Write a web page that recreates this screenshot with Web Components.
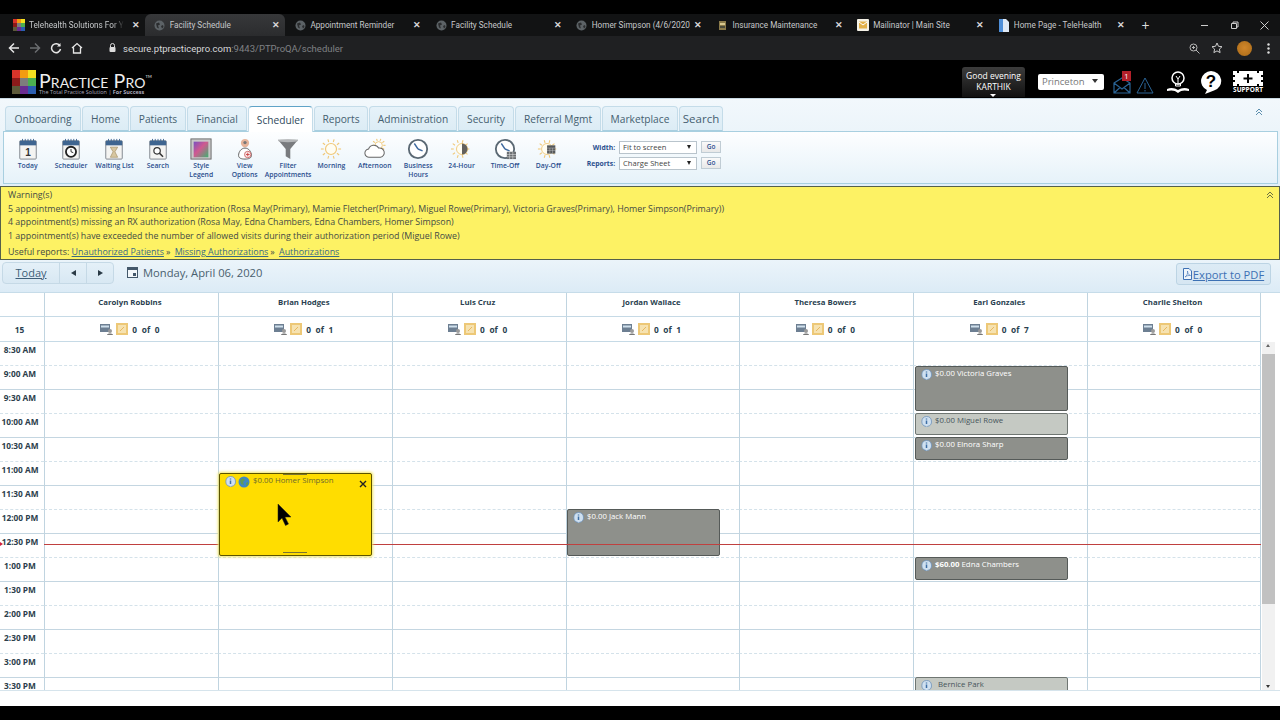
<!DOCTYPE html>
<html lang="en">
<head>
<meta charset="utf-8">
<title>Facility Schedule</title>
<style>
    html, body { margin: 0; height: 720px; background: #000; overflow: hidden; }
    body { display: flex; flex-direction: column; font-family: "Open Sans", "Noto Sans", sans-serif; }
    body > * { flex: none; }
</style>
</head>
<body>
<browser-bar></browser-bar>
<pp-header></pp-header>
<pp-nav></pp-nav>
<pp-warnings></pp-warnings>
<pp-datebar></pp-datebar>
<pp-schedule></pp-schedule>
<script>
const globe = `<svg width="11" height="11" viewBox="0 0 11 11"><circle cx="5.500" cy="5.500" r="5" fill="#5c6266"/><path d="M2 3.500l3-1 1 2-2 1 1 3-2-1zM7 6l2-1 .5 2-1.500 1.500z" fill="#2a2c2e"/></svg>`;

const tabIcons = {
    squares: `<svg width="12" height="12" viewBox="0 0 12 12"><rect width="4" height="4" fill="#d9342a"/><rect x="4" width="4" height="4" fill="#f39c12"/><rect x="8" width="4" height="4" fill="#f5e020"/><rect y="4" width="4" height="4" fill="#8c1a1a"/><rect x="4" y="4" width="4" height="4" fill="#7d7d7d"/><rect x="8" y="4" width="4" height="4" fill="#4caf50"/><rect y="8" width="4" height="4" fill="#5d5a3a"/><rect x="4" y="8" width="4" height="4" fill="#6a2c91"/><rect x="8" y="8" width="4" height="4" fill="#2a5db0"/></svg>`,
    globe,
    insurance: `<svg width="9" height="9" viewBox="0 0 9 9"><rect x="1" width="7" height="9" fill="#8a7a4a"/><rect x="2" y="2" width="5" height="2" fill="#d8c890"/><rect x="2" y="5" width="5" height="2" fill="#4a4a3a"/></svg>`,
    mail: `<svg width="12" height="12" viewBox="0 0 12 12"><rect width="12" height="12" rx="1" fill="#f4f1e6"/><rect x="2" y="2.500" width="8" height="7" fill="#e2b04a"/><path d="M2 3l4 3 4-3" fill="none" stroke="#fff" stroke-width="1"/></svg>`,
    doc: `<svg width="12" height="13" viewBox="0 0 12 13"><path d="M1 0h7l3 3v10H1z" fill="#dfe9f5"/><rect x="1" width="4" height="13" fill="#4f8fd8"/></svg>`
};

class BrowserTab extends HTMLElement {
    connectedCallback() {
        this.attachShadow({ mode: 'open' });
        const active = this.hasAttribute('active');
        this.shadowRoot.innerHTML = `
            <style>
                :host { display: flex; align-items: center; width: 140.700px; flex: none; height: 22px; box-sizing: border-box; padding: 0 5px 0 9px; gap: 4px; font-family: Roboto, sans-serif; font-size: 8.200px; color: #c6c8ca; border-radius: 6px 6px 0 0; background: ${active ? 'linear-gradient(#37383a,#2b2c2e)' : 'transparent'}; }
                .icon { width: 12px; display: flex; justify-content: center; flex: none; }
                .name { flex: 1; min-width: 0; white-space: nowrap; overflow: hidden; }
                :host([fade]) .name { -webkit-mask-image: linear-gradient(90deg, #000 85%, transparent 96%); mask-image: linear-gradient(90deg, #000 85%, transparent 96%); }
                .x { font-size: 8.500px; color: #d8d8d8; flex: none; font-weight: 700; }
            </style>
            <span class="icon">${tabIcons[this.dataset.icon]}</span>
            <span class="name"><slot></slot></span>
            <span class="x">✕</span>
        `;
    }
}

class BrowserBar extends HTMLElement {
    connectedCallback() {
        this.attachShadow({ mode: 'open' });
        this.shadowRoot.innerHTML = `
            <style>
                :host { display: block; padding-top: 14px; background: #000; }
                .tabs { display: flex; height: 22px; padding-left: 4px; background: #121314; align-items: stretch; }
                .plus { width: 28px; margin-left: 2px; display: flex; align-items: center; justify-content: center; color: #ddd; font-size: 14px; }
                .win { margin-left: auto; display: flex; align-items: center; color: #ccc; padding-right: 1px; }
                .win span { width: 30px; display: flex; justify-content: center; }
                .tools { display: flex; align-items: center; height: 24px; background: #1f2022; }
                .tools svg { flex: none; }
                .nav { display: flex; align-items: center; gap: 9px; padding-left: 8px; width: 85px; flex: none; }
                .url { font-family: Roboto, sans-serif; font-size: 9.500px; color: #7f8184; }
                .url b { font-weight: 400; color: #d7d8da; }
                .right { margin-left: auto; display: flex; align-items: center; padding-right: 10px; }
                .avatar { width: 15px; height: 15px; border-radius: 50%; background: radial-gradient(circle at 50% 45%, #d0862a, #a86a18); margin: 0 15px 0 14px; }
            </style>
            <div class="tabs">
                <browser-tab data-icon="squares" fade>Telehealth Solutions For You</browser-tab>
                <browser-tab data-icon="globe" active>Facility Schedule</browser-tab>
                <browser-tab data-icon="globe">Appointment Reminder</browser-tab>
                <browser-tab data-icon="globe">Facility Schedule</browser-tab>
                <browser-tab data-icon="globe">Homer Simpson (4/6/2020)</browser-tab>
                <browser-tab data-icon="insurance">Insurance Maintenance</browser-tab>
                <browser-tab data-icon="mail">Mailinator | Main Site</browser-tab>
                <browser-tab data-icon="doc">Home Page - TeleHealth</browser-tab>
                <span class="plus">+</span>
                <div class="win">
                    <span><svg width="9" height="9"><path d="M1 4.500h7" stroke="#ccc"/></svg></span>
                    <span><svg width="9" height="9"><path d="M1.500 2.500h5v5h-5zM3 2.500V1h5v5H6.500" fill="none" stroke="#ccc"/></svg></span>
                    <span><svg width="9" height="9"><path d="M.5.5l8 8M8.500.5l-8 8" stroke="#ccc"/></svg></span>
                </div>
            </div>
            <div class="tools">
                <div class="nav">
                    <svg width="12" height="12" viewBox="0 0 12 12"><path d="M11 6H2M6 1.500L1.500 6 6 10.500" fill="none" stroke="#e6e6e6" stroke-width="1.500"/></svg>
                    <svg width="12" height="12" viewBox="0 0 12 12"><path d="M1 6h9M6 1.500L10.500 6 6 10.500" fill="none" stroke="#6b6d70" stroke-width="1.500"/></svg>
                    <svg width="12" height="12" viewBox="0 0 12 12"><path d="M10 4A4.500 4.500 0 1 0 10.500 7" fill="none" stroke="#e6e6e6" stroke-width="1.500"/><path d="M10.500 1v3.500H7z" fill="#e6e6e6"/></svg>
                    <svg width="12" height="12" viewBox="0 0 12 12"><path d="M1 6l5-4.500L11 6M2.500 5.500V11h7V5.500" fill="none" stroke="#e6e6e6" stroke-width="1.300"/></svg>
                </div>
                <svg width="9" height="10" viewBox="0 0 9 10" style="margin-left:15px"><path d="M2.500 4V2.500a2 2 0 0 1 4 0V4" fill="none" stroke="#ddd"/><rect x="1.500" y="4" width="6" height="5" rx="1" fill="#ddd"/></svg>
                <span class="url" style="margin-left:6px"><b>secure.ptpracticepro.com</b>:9443/PTProQA/scheduler</span>
                <div class="right">
                    <svg width="11" height="11" viewBox="0 0 11 11" style="margin-right:11px"><circle cx="4.500" cy="4.500" r="3.500" fill="none" stroke="#b8b8b8"/><path d="M7 7l3.500 3.500M3 4.500h3M4.500 3v3" stroke="#b8b8b8"/></svg>
                    <svg width="12" height="12" viewBox="0 0 12 12"><path d="M6 1l1.500 3.300 3.500.4-2.600 2.400.7 3.500L6 8.900l-3.100 1.700.7-3.500L1 4.700l3.500-.4z" fill="none" stroke="#ccc"/></svg>
                    <span class="avatar"></span>
                    <svg width="3" height="11"><circle cx="1.500" cy="1.500" r="1.200" fill="#ddd"/><circle cx="1.500" cy="5.500" r="1.200" fill="#ddd"/><circle cx="1.500" cy="9.500" r="1.200" fill="#ddd"/></svg>
                </div>
            </div>
        `;
    }
}

class PpHeader extends HTMLElement {
    connectedCallback() {
        this.attachShadow({ mode: 'open' });
        this.shadowRoot.innerHTML = `
            <style>
                :host { display: flex; align-items: flex-end; height: 38px; background: #000; box-sizing: border-box; padding: 0 17px 1px 12px; color: #fff; }
                .logo { display: flex; align-items: flex-start; gap: 3px; margin-bottom: 2px; }
                .mark { display: grid; grid-template-columns: repeat(3, 8px); grid-auto-rows: 8px; }
                .brand { display: flex; flex-direction: column; padding-top: 1px; }
                .name { font-family: Lato, sans-serif; font-size: 19.500px; font-variant: small-caps; line-height: 19px; height: 19px; letter-spacing: .1px; color: #eee; white-space: nowrap; }
                .name sup { font-size: 4px; line-height: 0; vertical-align: 10px; }
                .tag { font-size: 5.500px; line-height: 6px; margin-top: -1px; color: #aab; white-space: nowrap; }
                .right { margin-left: auto; display: flex; align-items: flex-end; }
                .greet { width: 63px; height: 30px; box-sizing: border-box; padding-top: 3px; background: linear-gradient(#3c3c3c, #111); border-radius: 3px 3px 0 0; font-size: 8.500px; line-height: 11px; text-align: center; position: relative; }
                .greet i { position: absolute; left: 28px; bottom: 0; border: 3px solid transparent; border-top-color: #fff; border-bottom: 0; }
                .loc { width: 66px; height: 16px; box-sizing: border-box; margin: 0 0 7px 13px; background: #fff; border-radius: 2px; color: #777; font-size: 9.500px; padding-left: 4px; line-height: 16px; position: relative; }
                .loc i { position: absolute; right: 6px; top: 5px; border: 3px solid transparent; border-top: 4px solid #333; border-bottom: 0; }
                .icons { display: flex; align-items: flex-end; margin-left: 9px; margin-bottom: 3px; }
                .mail { position: relative; display: flex; }
                .badge { position: absolute; left: 9px; top: -5px; width: 9px; height: 10px; background: #b3202a; color: #fff; font-size: 7.500px; line-height: 10px; text-align: center; }
                .support { display: flex; flex-direction: column; align-items: center; font-size: 6.500px; line-height: 8px; margin-left: 11px; font-weight: 700; }
            </style>
            <div class="logo">
                <div class="mark">
                    <span style="background:#d9342a"></span><span style="background:#f39c12"></span><span style="background:#f5e020"></span>
                    <span style="background:#8c1a1a"></span><span style="background:#7d7d7d"></span><span style="background:#4caf50"></span>
                    <span style="background:#5d5a3a"></span><span style="background:#6a2c91"></span><span style="background:#2a5db0"></span>
                </div>
                <div class="brand">
                    <span class="name">Practice Pro<sup>TM</sup></span>
                    <span class="tag">The Total Practice Solution | <b>For Success</b></span>
                </div>
            </div>
            <div class="right">
                <div class="greet">Good evening<br>KARTHIK<i></i></div>
                <div class="loc">Princeton<i></i></div>
                <div class="icons">
                    <span class="mail">
                        <svg width="18" height="18" viewBox="0 0 18 18"><path d="M1 7l8-5 8 5v10H1zM1 7l8 6 8-6M1 17l6-5.500M17 17l-6-5.500" fill="none" stroke="#2a6496" stroke-width="1.200"/></svg>
                        <span class="badge">1</span>
                    </span>
                    <svg width="18" height="17" viewBox="0 0 18 17" style="margin-left:5px"><path d="M9 1l8 15H1zM9 6v6M9 13v1.500" fill="none" stroke="#2a6496" stroke-width="1"/></svg>
                    <svg width="24" height="24" viewBox="0 0 24 24" style="margin-left:12px"><circle cx="12" cy="8" r="6" fill="none" stroke="#fff" stroke-width="1.500"/><path d="M10 6l2 3 2-3M12 9v4M9.500 14h5v2h-5z" fill="none" stroke="#fff"/><path d="M12 23C9 20 5 20 1 21v-2c4-2 8-1 11 1 3-2 7-3 11-1v2c-4-1-8-1-11 2z" fill="#fff"/></svg>
                    <svg width="22" height="24" viewBox="0 0 22 24" style="margin-left:10px"><path d="M11 1a10.500 10 0 0 1 3 19.500L5 24l2-4A10.500 10 0 0 1 11 1z" fill="#fff"/><text x="11" y="17" font-family="Liberation Sans, sans-serif" font-size="17" font-weight="700" text-anchor="middle" fill="#000">?</text></svg>
                    <span class="support">
                        <svg width="30" height="15" viewBox="0 0 30 15"><path d="M0 0h4v2h2V0h18v2h2V0h4v4h-2v2h2v3h-2v2h2v4h-4v-2h-2v2H6v-2H4v2H0v-4h2V9H0V6h2V4H0z" fill="#fff"/><path d="M15 3v9M10.500 7.500h9" stroke="#000" stroke-width="2"/></svg>
                        SUPPORT
                    </span>
                </div>
            </div>
        `;
    }
}

class NavTab extends HTMLElement {
    connectedCallback() {
        this.attachShadow({ mode: 'open' });
        const active = this.hasAttribute('active');
        this.shadowRoot.innerHTML = `
            <style>
                :host { display: flex; align-items: center; justify-content: center; box-sizing: border-box; height: ${active ? 26 : 25}px; width: ${this.dataset.w}px; margin-right: 1px; font-size: ${this.dataset.size || 10.2}px; color: ${active ? '#2f4a5c' : '#456070'}; border: 1px solid #c4dce9; border-bottom: ${active ? 0 : '1px solid #a8cfe0'}; border-radius: 4px 4px 0 0; background: ${active ? '#fff' : 'linear-gradient(#e6f2f9,#dcecf5)'}; ${active ? 'border-top: 1px solid #5fa3c7; position: relative; z-index: 1;' : ''} white-space: nowrap; }
            </style>
            <slot></slot>
        `;
    }
}

const cal = inner => `<svg width="22" height="22" viewBox="0 0 24 24"><rect x="3" y="3" width="18" height="20" rx="1" fill="#f4f4f2" stroke="#7b8188"/><rect x="3" y="3" width="18" height="5" fill="#3f6590"/><path d="M6 1v3M9 1v3M12 1v3M15 1v3M18 1v3" stroke="#3f6590"/>${inner}</svg>`;
const rays = (cx, cy, r1, r2, color) => Array.from({ length: 10 }, (_, i) => {
    const a = i * Math.PI / 5;
    return `<path d="M${(cx + r1 * Math.cos(a)).toFixed(1)} ${(cy + r1 * Math.sin(a)).toFixed(1)}L${(cx + r2 * Math.cos(a)).toFixed(1)} ${(cy + r2 * Math.sin(a)).toFixed(1)}" stroke="${color}" stroke-width="1.200"/>`;
}).join('');
const clock = `<circle cx="12" cy="12" r="10" fill="#fff" stroke="#5a6873" stroke-width="2"/><path d="M12 12L8 6M12 12l5 2" stroke="#3f6aa0" stroke-width="1.500" fill="none"/>`;

const toolIcons = {
    today: cal(`<text x="12" y="20" font-family="Liberation Sans, sans-serif" font-size="11" text-anchor="middle" fill="#333">1</text>`),
    scheduler: cal(`<circle cx="12" cy="15" r="5.500" fill="#fff" stroke="#222" stroke-width="2"/><path d="M12 12v3l2.500 1" stroke="#222" fill="none"/>`),
    waiting: cal(`<path d="M8 10h8l-3 5 3 6H8l3-6z" fill="#d7c6a0" stroke="#a08b60" stroke-width=".7"/>`),
    search: cal(`<circle cx="11" cy="14" r="3.500" fill="#fff" stroke="#333" stroke-width="1.300"/><path d="M13.500 16.500l4 4" stroke="#333" stroke-width="1.600"/>`),
    legend: `<svg width="22" height="22" viewBox="0 0 24 24"><defs><linearGradient id="a" x1="0" x2="1" y1="0" y2="1"><stop offset="0" stop-color="#7a50c0"/><stop offset=".45" stop-color="#d05a90"/><stop offset="1" stop-color="#40b070"/></linearGradient></defs><rect x="1" y="1" width="22" height="22" fill="#c8c8c8" stroke="#666"/><rect x="4" y="4" width="16" height="17" fill="url(#a)"/></svg>`,
    view: `<svg width="22" height="22" viewBox="0 0 24 24"><circle cx="12" cy="5.500" r="4.500" fill="#e6b49a"/><circle cx="12" cy="5" r="1.800" fill="#777"/><path d="M12 11c-4 0-7 4-7 8 0 3 3 4 7 4s7-1 7-4c0-4-3-8-7-8z" fill="#fff" stroke="#555"/><circle cx="15" cy="18" r="3.500" fill="#fbeaea" stroke="#c66"/><path d="M15 16v4M13 18h4" stroke="#c44"/></svg>`,
    filter: `<svg width="22" height="22" viewBox="0 0 24 24"><path d="M1 2h22l-8.500 10v11l-5-3v-8z" fill="#797b7e"/><ellipse cx="12" cy="3" rx="11" ry="1.700" fill="#b4b6b8"/></svg>`,
    morning: `<svg width="22" height="22" viewBox="0 0 24 24"><circle cx="12" cy="12" r="6" fill="#fffdf2" stroke="#f0c878" stroke-width="1.300"/>${rays(12, 12, 8, 11, '#f0c878')}</svg>`,
    afternoon: `<svg width="22" height="22" viewBox="0 0 24 24">${rays(16, 8, 5, 7.500, '#f0c878')}<circle cx="16" cy="8" r="4" fill="#fff" stroke="#f0c878"/><path d="M6 21a4.500 4.500 0 0 1-1-9 6 6 0 0 1 11-1 5 5 0 0 1 2 10z" fill="#fff" stroke="#666" stroke-width="1.100"/></svg>`,
    business: `<svg width="22" height="22" viewBox="0 0 24 24">${clock}</svg>`,
    '24hour': `<svg width="22" height="22" viewBox="0 0 24 24">${rays(10, 12, 7, 10, '#f0c878')}<circle cx="12" cy="12" r="6" fill="#fffdf2" stroke="#f0c878"/><path d="M12 6a6 6 0 0 1 0 12z" fill="#62605c"/></svg>`,
    timeoff: `<svg width="22" height="22" viewBox="0 0 24 24">${clock}<rect x="14" y="15" width="10" height="8" fill="#6b6f72"/><path d="M14 18h10M14 20.500h10M17 15v8M20.500 15v8" stroke="#ddd" stroke-width=".6"/></svg>`,
    dayoff: `<svg width="22" height="22" viewBox="0 0 24 24">${rays(11, 12, 7, 10, '#f0c878')}<circle cx="11" cy="12" r="6" fill="#fffdf2" stroke="#f0c878"/><rect x="11" y="8" width="9" height="9" fill="#55585a"/><path d="M11 11h9M11 13.500h9M14 11v6M17 11v6" stroke="#ccc" stroke-width=".5"/></svg>`
};

class ToolBtn extends HTMLElement {
    connectedCallback() {
        this.attachShadow({ mode: 'open' });
        this.shadowRoot.innerHTML = `
            <style>
                :host { display: flex; flex-direction: column; align-items: center; width: 43.400px; flex: none; font-size: 6.800px; font-weight: 600; line-height: 9px; color: #2b4f8e; text-align: center; white-space: nowrap; }
                svg { display: block; margin-bottom: 1px; }
            </style>
            ${toolIcons[this.dataset.icon]}
            <slot></slot>
        `;
    }
}

class FormRow extends HTMLElement {
    connectedCallback() {
        this.attachShadow({ mode: 'open' });
        this.shadowRoot.innerHTML = `
            <style>
                :host { display: flex; align-items: center; height: 14px; }
                label { width: 40px; text-align: right; font-size: 6.800px; font-weight: 700; color: #2b4f8e; margin-right: 4px; }
                .sel { width: 78px; height: 13px; box-sizing: border-box; border: 1px solid #b9c4cc; background: #fff; font-size: 7.600px; line-height: 11px; color: #444; padding-left: 3px; position: relative; }
                .sel i { position: absolute; right: 5px; top: 3px; border: 2.500px solid transparent; border-top: 4px solid #222; border-bottom: 0; }
                .go { width: 20px; height: 12px; box-sizing: border-box; margin-left: 4px; border: 1px solid #c0ccd4; background: linear-gradient(#fafafa,#e8e8e8); font-size: 6.500px; line-height: 10px; font-weight: 600; text-align: center; color: #2b4f8e; }
            </style>
            <label>${this.dataset.label}</label>
            <span class="sel"><slot></slot><i></i></span>
            <span class="go">Go</span>
        `;
    }
}

class PpNav extends HTMLElement {
    connectedCallback() {
        this.attachShadow({ mode: 'open' });
        this.shadowRoot.innerHTML = `
            <style>
                :host { display: block; height: 88px; box-sizing: border-box; padding: 7px 2px 0 3px; background: linear-gradient(#f2f8fc,#e2eff7); border-top: 1px solid #c8d8e2; font-family: "Open Sans", sans-serif; position: relative; }
                .tabs { display: flex; padding-left: 2px; height: 25px; }
                .bar { box-sizing: border-box; height: 53px; display: flex; padding: 6px 0 0 2px; border: 1px solid #a8cfe0; background: linear-gradient(#fdfeff,#e6f2f9); }
                .form { display: flex; flex-direction: column; gap: 2px; padding: 2px 0 0 0; margin-left: 5px; }
                .up { position: absolute; right: 17px; top: 9px; }
            </style>
            <div class="tabs">
                <nav-tab data-w="76">Onboarding</nav-tab>
                <nav-tab data-w="47">Home</nav-tab>
                <nav-tab data-w="56">Patients</nav-tab>
                <nav-tab data-w="60">Financial</nav-tab>
                <nav-tab data-w="65" active>Scheduler</nav-tab>
                <nav-tab data-w="54">Reports</nav-tab>
                <nav-tab data-w="88">Administration</nav-tab>
                <nav-tab data-w="56">Security</nav-tab>
                <nav-tab data-w="86">Referral Mgmt</nav-tab>
                <nav-tab data-w="76">Marketplace</nav-tab>
                <nav-tab data-w="44" data-size="11.500">Search</nav-tab>
            </div>
            <div class="bar">
                <tool-btn data-icon="today">Today</tool-btn>
                <tool-btn data-icon="scheduler">Scheduler</tool-btn>
                <tool-btn data-icon="waiting">Waiting List</tool-btn>
                <tool-btn data-icon="search">Search</tool-btn>
                <tool-btn data-icon="legend">Style<br>Legend</tool-btn>
                <tool-btn data-icon="view">View<br>Options</tool-btn>
                <tool-btn data-icon="filter">Filter<br>Appointments</tool-btn>
                <tool-btn data-icon="morning">Morning</tool-btn>
                <tool-btn data-icon="afternoon">Afternoon</tool-btn>
                <tool-btn data-icon="business">Business<br>Hours</tool-btn>
                <tool-btn data-icon="24hour">24-Hour</tool-btn>
                <tool-btn data-icon="timeoff">Time-Off</tool-btn>
                <tool-btn data-icon="dayoff">Day-Off</tool-btn>
                <div class="form">
                    <form-row data-label="Width:">Fit to screen</form-row>
                    <form-row data-label="Reports:">Charge Sheet</form-row>
                </div>
            </div>
            <svg class="up" width="8" height="8" viewBox="0 0 8 8"><path d="M1 4l3-3 3 3M1 7l3-3 3 3" fill="none" stroke="#5c8fae"/></svg>
        `;
    }
}

class PpWarnings extends HTMLElement {
    connectedCallback() {
        this.attachShadow({ mode: 'open' });
        this.shadowRoot.innerHTML = `
            <style>
                :host { display: block; height: 74px; box-sizing: border-box; padding: 2px 7px 0 7px; background: #fdf264; border: 1px solid #55604a; font-size: 8.870px; line-height: 13.500px; color: #444b45; position: relative; white-space: nowrap; }
                .reports { margin-top: 2.500px; }
                a { color: #3a6a86; text-decoration: underline; }
                i { font-style: normal; margin: 0 2px; }
                .up { position: absolute; right: 5px; top: 4px; }
            </style>
            <div>Warning(s)</div>
            <div>5 appointment(s) missing an Insurance authorization (Rosa May(Primary), Mamie Fletcher(Primary), Miguel Rowe(Primary), Victoria Graves(Primary), Homer Simpson(Primary))</div>
            <div>4 appointment(s) missing an RX authorization (Rosa May, Edna Chambers, Edna Chambers, Homer Simpson)</div>
            <div>1 appointment(s) have exceeded the number of allowed visits during their authorization period (Miguel Rowe)</div>
            <div class="reports">Useful reports: <a>Unauthorized Patients</a><i>»</i> <a>Missing Authorizations</a><i>»</i> <a>Authorizations</a></div>
            <svg class="up" width="8" height="8" viewBox="0 0 8 8"><path d="M1 4l3-3 3 3M1 7l3-3 3 3" fill="none" stroke="#6a7040"/></svg>
        `;
    }
}

class PpDatebar extends HTMLElement {
    connectedCallback() {
        this.attachShadow({ mode: 'open' });
        this.shadowRoot.innerHTML = `
            <style>
                :host { display: flex; align-items: flex-start; height: 33px; box-sizing: border-box; padding: 2px 9px 0 2px; background: linear-gradient(#ebf4fa,#dcebf6); border-bottom: 1px solid #c6dce9; color: #3e5464; }
                .group { display: flex; height: 20px; border: 1px solid #c5d9e6; border-radius: 4px; background: linear-gradient(#e4f0f8,#d8e8f3); align-items: stretch; }
                .group span { display: flex; box-sizing: border-box; align-items: center; justify-content: center; border-left: 1px solid #c5d9e6; width: 27px; }
                .group span:first-child { border-left: 0; width: 56px; padding-bottom: 2px; font-size: 11px; text-decoration: underline; color: #3e5e78; }
                .date { display: flex; align-items: center; gap: 4px; height: 20px; margin-left: 13px; font-size: 11.200px; color: #49606f; }
                .export { margin-left: auto; width: 95px; height: 22px; margin-top: 1px; box-sizing: border-box; border: 1px solid #bcd4e4; border-radius: 3px; display: flex; align-items: center; justify-content: center; gap: 1px; font-size: 11.200px; color: #3d71b4; text-decoration: underline; background: linear-gradient(#dcebf5,#d6e6f2); }
            </style>
            <div class="group">
                <span>Today</span>
                <span><svg width="5" height="6"><path d="M5 0v6L0 3z" fill="#2a3a46"/></svg></span>
                <span><svg width="5" height="6"><path d="M0 0v6l5-3z" fill="#2a3a46"/></svg></span>
            </div>
            <div class="date">
                <svg width="12" height="12" viewBox="0 0 12 12"><rect x=".5" y="1.500" width="10" height="10" fill="#f4f8fb" stroke="#44586a"/><rect x=".5" y="1.500" width="10" height="2.500" fill="#44586a"/><rect x="6" y="7" width="3" height="3" fill="#44586a"/></svg>
                Monday, April 06, 2020
            </div>
            <div class="export">
                <svg width="9" height="12" viewBox="0 0 9 12"><path d="M.5.500h5.500l2.500 2.500v8.500H.5z" fill="#eef5fb" stroke="#3d71b4"/><path d="M2 9c2-1 3-4 2.500-6 0 2 1 4 3 4.500-2-.2-4 .3-5.500 1.500z" fill="none" stroke="#3d71b4" stroke-width=".6"/></svg>
                Export to PDF
            </div>
        `;
    }
}

class PpAppt extends HTMLElement {
    connectedCallback() {
        this.attachShadow({ mode: 'open' });
        const kind = this.dataset.kind || 'dark';
        const colours = {
            dark: 'background: #8e908b; border: 1px solid #555a58; color: #fff;',
            light: 'background: #c5c9c3; border: 1px solid #6f7672; color: #47555c;',
            active: 'background: #ffdd00; border: 1px solid #5c5400; color: #6c6a30; box-shadow: 0 0 3px 1px #f2e566;'
        };
        const info = `<svg width="11" height="11" viewBox="0 0 11 11"><path d="M5.500.500a5 5 0 0 1 1 9.900l-1 .6-.6-.6a5 5 0 0 1 .6-9.900z" fill="#cfe0f0" stroke="#6e93bb" stroke-width=".8"/><path d="M5.500 2.500v1M5.500 4.500v3.500" stroke="#3d6fa6" stroke-width="1.500"/></svg>`;
        const world = `<svg width="12" height="12" viewBox="0 0 12 12"><circle cx="6" cy="6" r="5.500" fill="#3f88c4"/><path d="M2 4l3-2 2 2-2 2 1 3-3-1zM8 7l2-1 .5 2-2 2z" fill="#5f9a5a"/></svg>`;
        const hasWorld = kind === 'active';
        this.shadowRoot.innerHTML = `
            <style>
                :host { position: absolute; left: ${this.dataset.x}px; top: ${this.dataset.top}px; width: 153px; height: ${this.dataset.h}px; box-sizing: border-box; border-radius: 2px; ${colours[kind]} font-size: 7.800px; line-height: 11px; padding: 1px 0 0 5px; overflow: ${hasWorld ? 'visible' : 'hidden'}; white-space: nowrap; z-index: ${hasWorld ? 3 : 1}; }
                .row { display: flex; align-items: flex-start; gap: ${this.dataset.gap || 3}px; }
                .icons { display: flex; gap: 2px; flex: none; margin-top: 1px; }
                b { font-weight: 700; }
                .x { position: absolute; right: 4px; top: 6px; }
                .grip { position: absolute; left: 63px; width: 24px; height: 1px; background: #7a7430; }
            </style>
            <div class="row"><span class="icons">${info}${hasWorld ? world : ''}</span><span><slot></slot></span></div>
            ${hasWorld ? `<svg class="x" width="8" height="8" viewBox="0 0 8 8"><path d="M1 1l6 6M7 1l-6 6" stroke="#222" stroke-width="1.400"/></svg><span class="grip" style="top:0"></span><span class="grip" style="bottom:2px"></span>` : ''}
        `;
    }
}

class PpSchedule extends HTMLElement {
    connectedCallback() {
        this.attachShadow({ mode: 'open' });
        const doctors = [
            ['Carolyn Robbins', 0], ['Brian Hodges', 1], ['Luis Cruz', 0], ['Jordan Wallace', 1],
            ['Theresa Bowers', 0], ['Earl Gonzales', 7], ['Charlie Shelton', 0]
        ];
        const times = ['8:30 AM', '9:00 AM', '9:30 AM', '10:00 AM', '10:30 AM', '11:00 AM', '11:30 AM', '12:00 PM', '12:30 PM', '1:00 PM', '1:30 PM', '2:00 PM', '2:30 PM', '3:00 PM', '3:30 PM'];
        const monitor = `<svg width="13" height="11" viewBox="0 0 13 11"><rect width="10" height="8" fill="#6d7f92"/><rect x="1" y="1.500" width="8" height="2" fill="#cfe0ec"/><circle cx="10" cy="7" r="2" fill="#9a9a9a"/><path d="M7 11c0-2 6-2 6 0z" fill="#777"/></svg>`;
        const star = `<svg width="12" height="12" viewBox="0 0 12 12"><rect width="12" height="12" fill="#edc877"/><rect x="2" y="2" width="8" height="8" fill="#f6e2b0"/><path d="M4 8l4-4" stroke="#e8b860"/></svg>`;
        this.shadowRoot.innerHTML = `
            <style>
                :host { display: block; height: 427px; background: #fff; position: relative; overflow: hidden; color: #2a3f50; }
                .cols { display: grid; grid-template-columns: 44px repeat(7, 173.860px); grid-template-rows: 24px 25px; width: 1262px; }
                .cell { box-sizing: border-box; border-left: 1px solid #c0d4e0; border-bottom: 1px solid #c6dae6; display: flex; align-items: center; justify-content: center; gap: 3px; font-size: 7.800px; font-weight: 700; white-space: nowrap; padding-right: 3px; }
                .cell.name { padding-bottom: 6px; }
                .cell.first { border-left: 0; padding-right: 5px; font-size: 8.300px; }
                .count { word-spacing: 2.500px; margin-left: 1px; font-size: 8.300px; }
                .last { border-right: 1px solid #c0d4e0; }
                .body { position: relative; height: 348px; overflow: hidden; width: 1275px; }
                .grid { display: grid; grid-template-columns: 44px repeat(7, 173.860px); width: 1262px; grid-auto-rows: 24px; }
                .slot { box-sizing: border-box; border-left: 1px solid #c0d4e0; border-bottom: 1px dashed #d4e2ea; }
                .slot.solid { border-bottom: 1px solid #c4d6e1; }
                .time { box-sizing: border-box; font-size: 8.300px; line-height: 9px; font-weight: 700; text-align: center; padding: 3px 4px 0 0; border-bottom: 1px dashed #d4e2ea; white-space: nowrap; color: #2c3e4c; }
                .time.solid { border-bottom: 1px solid #c4d6e1; }
                .now { position: absolute; left: 44px; width: 1217px; top: 202px; height: 1px; background: #c0403f; z-index: 2; }
                .mark { position: absolute; left: 0; top: 200px; border: 2px solid transparent; border-left: 3px solid #d02040; border-right: 0; z-index: 2; }
                .scroll { position: absolute; left: 1262px; top: 0; width: 13px; height: 348px; background: #f1f1f1; }
                .thumb { position: absolute; left: 0; right: 0; top: 12px; height: 250px; background: #c1c1c1; }
                .scroll i { position: absolute; left: 4px; border: 2.500px solid transparent; }
                .foot { height: 16px; border-top: 1px solid #d6e4ec; box-sizing: border-box; }
                .black { height: 14px; background: #000; }
                .cursor { position: absolute; left: 277px; top: 162px; z-index: 4; }
            </style>
            <div class="cols">
                <div class="cell first"></div>
                ${doctors.map(([name], i) => `<div class="cell name ${i === 6 ? 'last' : ''}">${name}</div>`).join('')}
                <div class="cell first">15</div>
                ${doctors.map(([, n], i) => `<div class="cell ${i === 6 ? 'last' : ''}">${monitor}${star}<span class="count">0 of ${n}</span></div>`).join('')}
            </div>
            <div class="body">
                <div class="grid">
                    ${times.map((t, r) => `
                        <div class="time ${r % 2 ? 'solid' : ''}">${t}</div>
                        ${doctors.map((d, i) => `<div class="slot ${r % 2 ? 'solid' : ''} ${i === 6 ? 'last' : ''}"></div>`).join('')}
                    `).join('')}
                </div>
                <div class="now"></div>
                <div class="mark"></div>
                <pp-appt data-x="219" data-top="131" data-h="83" data-kind="active">$0.00 Homer Simpson</pp-appt>
                <pp-appt data-x="567" data-top="167" data-h="47">$0.00 Jack Mann</pp-appt>
                <pp-appt data-x="915" data-top="24" data-h="45">$0.00 Victoria Graves</pp-appt>
                <pp-appt data-x="915" data-top="71" data-h="22" data-kind="light">$0.00 Miguel Rowe</pp-appt>
                <pp-appt data-x="915" data-top="95" data-h="23">$0.00 Elnora Sharp</pp-appt>
                <pp-appt data-x="915" data-top="215" data-h="23"><b>$60.00</b> Edna Chambers</pp-appt>
                <pp-appt data-x="915" data-top="335" data-h="30" data-kind="light" data-gap="6">Bernice Park</pp-appt>
                <svg class="cursor" width="14" height="22" viewBox="0 0 14 22"><path d="M1 0v18l4-4 3.500 7.500 3-1.500L8 13h6z" fill="#000" stroke="#222" stroke-width=".5"/></svg>
                <div class="scroll">
                    <i style="top:2px;border-bottom:3px solid #666;border-top:0"></i>
                    <div class="thumb"></div>
                    <i style="bottom:2px;border-top:3px solid #333;border-bottom:0"></i>
                </div>
            </div>
            <div class="foot"></div>
            <div class="black"></div>
        `;
    }
}

customElements.define('browser-tab', BrowserTab);
customElements.define('browser-bar', BrowserBar);
customElements.define('pp-header', PpHeader);
customElements.define('nav-tab', NavTab);
customElements.define('tool-btn', ToolBtn);
customElements.define('form-row', FormRow);
customElements.define('pp-nav', PpNav);
customElements.define('pp-warnings', PpWarnings);
customElements.define('pp-datebar', PpDatebar);
customElements.define('pp-appt', PpAppt);
customElements.define('pp-schedule', PpSchedule);
</script>
</body>
</html>
